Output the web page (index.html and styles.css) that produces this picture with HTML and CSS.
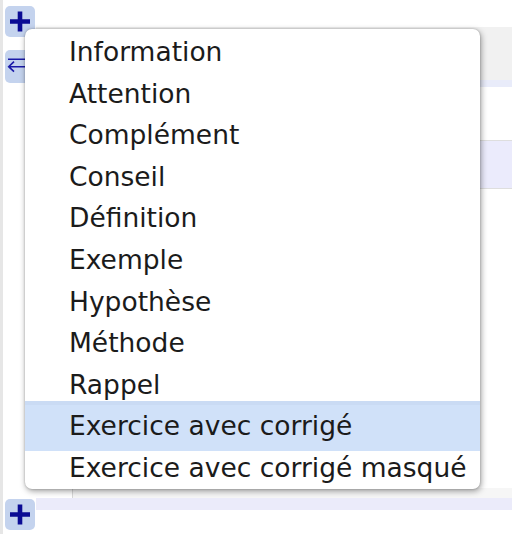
FILE: index.html
```html
<!DOCTYPE html>
<html lang="fr">
<head>
<meta charset="utf-8">
<link rel="stylesheet" href="styles.css">
</head>
<body>
<div class="page">
  <div class="tools">
    <div class="btn btn-add">
      <svg width="30" height="31" viewBox="0 0 30 31"><path d="M15 5.5v20M5 15.5h20" stroke="#0b0b94" stroke-width="4.6" fill="none"/></svg>
    </div>
    <div class="btn btn-back">
      <svg width="30" height="33" viewBox="0 0 30 33"><path d="M3 9.3h22M3.5 16.7h21M9 11.7l-5.3 5 5.3 5" stroke="#1a1aa8" stroke-width="1.6" fill="none"/></svg>
    </div>
    <div class="tools-fill"></div>
    <div class="btn btn-add btn-bottom">
      <svg width="30" height="31" viewBox="0 0 30 31"><path d="M15 5.5v20M5 15.5h20" stroke="#0b0b94" stroke-width="4.6" fill="none"/></svg>
    </div>
  </div>
  <div class="content">
    <div class="gap-top"></div>
    <div class="head"></div>
    <div class="strip"></div>
    <div class="row-white"></div>
    <div class="row-lav"></div>
    <div class="body-fill"></div>
    <div class="box"></div>
    <div class="foot"></div>
  </div>
</div>
<div class="menu">
  <div class="item">Information</div>
  <div class="item">Attention</div>
  <div class="item">Complément</div>
  <div class="item">Conseil</div>
  <div class="item">Définition</div>
  <div class="item">Exemple</div>
  <div class="item">Hypothèse</div>
  <div class="item">Méthode</div>
  <div class="item">Rappel</div>
  <div class="item active">Exercice avec corrigé</div>
  <div class="item">Exercice avec corrigé masqué</div>
</div>
</body>
</html>
```
FILE: styles.css
```css
html, body {
  margin: 0;
  padding: 0;
  background: #ffffff;
  width: 512px;
  height: 534px;
  overflow: hidden;
  font-family: "DejaVu Sans", Verdana, sans-serif;
}
.page {
  display: flex;
  height: 534px;
  border-left: 3px solid #e6e6e6;
  box-sizing: border-box;
}
.tools {
  width: 33px;
  display: flex;
  flex-direction: column;
  padding-top: 6px;
  padding-left: 2px;
  box-sizing: border-box;
}
.btn {
  width: 30px;
  background: #c4d3ee;
  border-radius: 5px;
  display: flex;
}
.btn-add { height: 31px; }
.btn-back { height: 33px; margin-top: 13px; }
.tools-fill { flex: 1; }
.btn-bottom { margin-bottom: 4px; }
.content {
  flex: 1;
  display: flex;
  flex-direction: column;
}
.gap-top { height: 27px; }
.head { height: 53px; background: #f1f1f1; }
.strip { height: 7px; background: #e9ecfa; }
.row-white { height: 53px; border-bottom: 1px solid #dedede; }
.row-lav { height: 47px; background: #ebebfc; border-bottom: 1px solid #dedede; }
.body-fill { flex: 1; }
.box {
  height: 10px;
  margin-left: 36px;
  background: #f6f6f6;
  border-left: 1px solid #d8d8d8;
}
.foot { height: 12px; background: #ebebfa; margin-bottom: 24px; }
.menu {
  position: absolute;
  left: 25px;
  top: 29px;
  width: 455px;
  padding-top: 2px;
  background: #ffffff;
  border-radius: 7px;
  overflow: hidden;
  box-shadow: 1px 2px 6px rgba(0,0,0,0.4), 0 0 2px rgba(0,0,0,0.25);
}
.item {
  height: 41.6px;
  line-height: 41.6px;
  padding-left: 44px;
  font-size: 26.5px;
  color: #1b1b1b;
  white-space: nowrap;
}
.item.active {
  background: #d0e1f9;
  box-shadow: 0 -4px 0 #cadbf4, 0 4px 0 #d0e1f9;
}
```
